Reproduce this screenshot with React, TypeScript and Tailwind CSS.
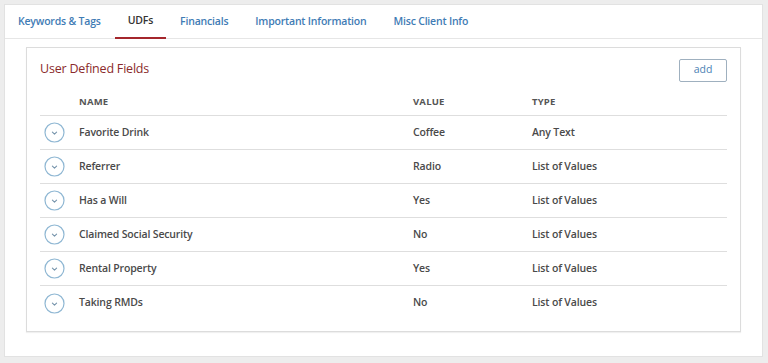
import React from 'react'

const tabs = ['Keywords & Tags', 'UDFs', 'Financials', 'Important Information', 'Misc Client Info']

const rows = [
  { name: 'Favorite Drink', value: 'Coffee', type: 'Any Text' },
  { name: 'Referrer', value: 'Radio', type: 'List of Values' },
  { name: 'Has a Will', value: 'Yes', type: 'List of Values' },
  { name: 'Claimed Social Security', value: 'No', type: 'List of Values' },
  { name: 'Rental Property', value: 'Yes', type: 'List of Values' },
  { name: 'Taking RMDs', value: 'No', type: 'List of Values' },
]

function ExpandIcon() {
  return (
    <svg width="21" height="21" viewBox="0 0 21 21" fill="none">
      <circle cx="10.5" cy="10.5" r="9.5" stroke="#8fb7d3" strokeWidth="1.2" />
      <path d="M8.4 10.2 L10.5 12.2 L12.6 10.2" stroke="#7593ab" strokeWidth="1.1" strokeLinecap="round" strokeLinejoin="round" />
    </svg>
  )
}

export default function App() {
  return (
    <div
      className="w-[768px] h-[363px] bg-[#ededed] pt-[4px] pl-[4px] pr-[5px] pb-[6px]"
      style={{ fontFamily: '"Open Sans", "Noto Sans", sans-serif' }}
    >
      <div className="h-full bg-white border border-[#e2e2e2] flex flex-col">
        {/* Tabs */}
        <div className="h-[34px] border-b border-[#e6e6e6] flex items-stretch pl-[13px] gap-[27px] shrink-0">
          {tabs.map((t) => (
            <div
              key={t}
              className={
                t === 'UDFs'
                  ? 'flex items-center px-[13px] -mx-[13px] text-[10.5px] tracking-[-0.2px] font-semibold text-[#333] border-b-2 border-[#a4262c] -mb-px'
                  : 'flex items-center text-[10.5px] tracking-[-0.2px] font-semibold text-[#3f7cb5]'
              }
            >
              {t}
            </div>
          ))}
        </div>

        {/* Card */}
        <div className="mt-[8px] mx-[21px] h-[285px] border border-[#dcdcdc] shadow-[0_1px_1px_rgba(0,0,0,0.06)] px-[13px]">
          <div className="flex items-center justify-between h-[42px]">
            <div className="text-[12.5px] tracking-[-0.2px] text-[#8a2a2b]">User Defined Fields</div>
            <button className="w-[48px] h-[23px] mt-[2px] border border-[#9fb0bf] rounded-[2px] text-[10.5px] text-[#4b7fb3]">
              add
            </button>
          </div>

          <div className="grid grid-cols-[39px_334px_119px_1fr] h-[26px] items-center border-b border-[#dedede] text-[9.5px] font-bold text-[#555] tracking-[0.2px]">
            <div />
            <div>NAME</div>
            <div>VALUE</div>
            <div>TYPE</div>
          </div>

          {rows.map((r, i) => (
            <div
              key={r.name}
              className={
                'grid grid-cols-[39px_334px_119px_1fr] h-[34px] items-center text-[10.5px] tracking-[-0.15px] font-semibold text-[#4a4a4a]' +
                (i < rows.length - 1 ? ' border-b border-[#dedede]' : '')
              }
            >
              <div className="pl-[4px] flex items-center">
                <ExpandIcon />
              </div>
              <div>{r.name}</div>
              <div>{r.value}</div>
              <div>{r.type}</div>
            </div>
          ))}
        </div>
      </div>
    </div>
  )
}
